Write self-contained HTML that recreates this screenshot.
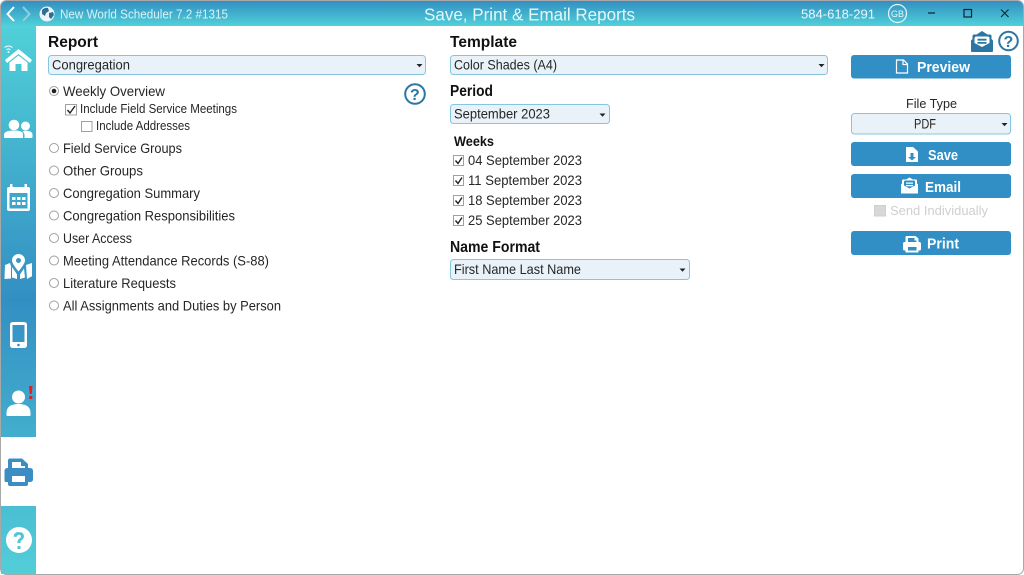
<!DOCTYPE html>
<html lang="en">
<head>
<meta charset="utf-8">
<title>New World Scheduler</title>
<style>
html,body{margin:0;padding:0;background:#fff;width:1024px;height:575px;overflow:hidden}
svg{display:block;filter:blur(.25px)}
text{font-family:"Liberation Sans",sans-serif;fill:#262626}
.b{font-weight:bold;font-size:16px;fill:#111}
.n{font-size:14px}
.s{font-size:12.5px}
.w{font-weight:bold;font-size:14.5px;fill:#fff}
.sel{fill:#e9f2f8;stroke:#86c5e0;stroke-width:1}
.btn{fill:#318fc5}
.r{fill:#fff;stroke:#a0a0a0;stroke-width:1}
.c{fill:#fff;stroke:#a0a0a0;stroke-width:1}
.m{fill:none;stroke:#222;stroke-width:1.4}
</style>
</head>
<body>
<svg width="1024" height="575" viewBox="0 0 1024 575" xmlns="http://www.w3.org/2000/svg">
<defs>
<linearGradient id="tb" x1="0" y1="0" x2="0" y2="1"><stop offset="0" stop-color="#338fc3"/><stop offset="1" stop-color="#50d0d8"/></linearGradient>
<linearGradient id="sb" gradientUnits="userSpaceOnUse" x1="0" y1="26" x2="0" y2="574"><stop offset="0" stop-color="#50d0d8"/><stop offset=".5" stop-color="#338fc3"/><stop offset="1" stop-color="#52ced8"/></linearGradient>
</defs>
<rect width="1024" height="575" fill="#fff"/>
<path d="M1 26V6Q1 1 6 1H1018Q1023 1 1023 6V26Z" fill="url(#tb)"/>
<rect x="1" y="26" width="35" height="548" fill="url(#sb)"/>
<rect x="1" y="437" width="35" height="69" fill="#fff"/>
<rect x=".5" y=".5" width="1023" height="574" rx="6" fill="none" stroke="#a8a8a8"/>

<!-- title bar -->
<path d="M14 7L7.500 14L14 21" fill="none" stroke="#fff" stroke-width="2"/>
<path d="M23 7L29.500 14L23 21" fill="none" stroke="#8fd0dc" stroke-width="2"/>
<circle cx="47" cy="14" r="7.500" fill="#eef4f6"/>
<path d="M42 10q3-3 6-2l1 3-3 2-1 3-3-2zM49 13l4-1 1 3-3 4-2-2z" fill="#2d6f96"/>
<text x="60" y="18.500" textLength="168" lengthAdjust="spacingAndGlyphs" font-size="12.500" style="fill:#d8f2f6">New World Scheduler 7.2 #1315</text>
<text x="424" y="20.500" textLength="211" lengthAdjust="spacingAndGlyphs" font-size="17.500" style="fill:#e6f7f9">Save, Print &amp; Email Reports</text>
<text x="801" y="18.500" textLength="74" lengthAdjust="spacingAndGlyphs" font-size="13" style="fill:#eaf8fa">584-618-291</text>
<circle cx="897.500" cy="13.500" r="9" fill="none" stroke="#e6f7f9" stroke-width="1.200"/>
<text x="891" y="17" textLength="13" lengthAdjust="spacingAndGlyphs" font-size="9.500" style="fill:#e6f7f9">GB</text>
<path d="M928 13h7" stroke="#123" stroke-width="1.200"/>
<rect x="964" y="9.500" width="7.500" height="7.500" fill="none" stroke="#123" stroke-width="1.200"/>
<path d="M1001 9.500l7.500 7.500M1008.500 9.500l-7.500 7.500" stroke="#123" stroke-width="1.100"/>

<!-- sidebar icons -->
<g fill="#fff">
<path d="M5 60L18.500 49L32 60L30 63L18.500 54L7 63Z"/>
<path d="M9.500 62.500L18.500 55.500L27.500 62.500V71H21.500V64H15.500V71H9.500Z"/>
<path d="M4.500 47.500q4-3 8-0M6.500 49.800q2-1.700 4 0" fill="none" stroke="#fff" stroke-width="1"/>
<circle cx="8.500" cy="52" r="1"/>
<circle cx="14" cy="125" r="5.300"/><circle cx="25.500" cy="126" r="4.500"/>
<path d="M5 138q-1 0-1-1v-2q0-4.500 10-4.500t9 4.500v3z"/><path d="M24.500 138v-3q0-2-2-3.500q1-.8 3.500-.8q6.500 0 6.500 4.300v2q0 1-1 1z"/>
<path fill-rule="evenodd" d="M10 184h2.500v3h12v-3h2.500v3h1q2 0 2 2v20q0 2-2 2H9q-2 0-2-2v-20q0-2 2-2h1zM9.500 193v15.500h18V193z"/>
<rect x="12" y="197" width="3.500" height="3"/><rect x="17" y="197" width="3.500" height="3"/><rect x="22" y="197" width="3.500" height="3"/>
<rect x="12" y="202" width="3.500" height="3"/><rect x="17" y="202" width="3.500" height="3"/><rect x="22" y="202" width="3.500" height="3"/>
<path fill-rule="evenodd" d="M18.500 254a6.500 6.500 0 0 1 6.500 6.500q0 3-6.500 11q-6.500-8-6.500-11a6.500 6.500 0 0 1 6.500-6.500zM18.500 258a2.500 2.500 0 1 0 .01 0z"/>
<path d="M5 265l5-2q.5 2 1 3v12.500l-6 0.500q-.5 0-.5-.5zM12 267q3 4 5 7.500v4.500l-5-1.500zM20 274.500q2-3 4-6l1 9-5 1.500zM26 265l6-2v13q0 .5-.5.500L27 279z"/>
<path fill-rule="evenodd" d="M13 322h11q3 0 3 3v20q0 3-3 3H13q-3 0-3-3v-20q0-3 3-3zM12.500 325v17h12v-17z"/>
<circle cx="18.500" cy="345" r="1.300" fill="#338fc3"/>
<circle cx="18.500" cy="397" r="6.500"/>
<path d="M7 416q-.5 0-.5-1v-2q0-9 12-9t12 9v2q0 1-.5 1z"/>
<path d="M29 386h3.500l-.8 8h-1.900zM29.300 396h3v3h-3z" fill="#f01818"/>
<path fill-rule="evenodd" d="M19 527a13 13 0 1 1-.01 0zM19 532q-5 0-5.500 4.500l3 .5q.5-2.300 2.500-2.300t2 1.800q0 1-1.500 2t-2 3v1.500h3v-1q0-1 1.500-2t2-3.500q0-4.500-5.500-4.500zM17.500 546v3h3v-3z"/>
</g>
<g fill="#3a8ec4">
<path fill-rule="evenodd" d="M10 458.500h12l6 5.500v4h2q3 0 3 3v8q0 3-3 3h-2v2q0 2-2 2H10q-2 0-2-2v-2H6q-1.500 0-1.500-1.500V471q0-3 3-3H8v-7.500q0-2 2-2zM12 462v6h13v-2h-4v-4zM12 476v6h13v-6z"/>
</g>

<!-- Report column -->
<text class="b" x="48" y="47" textLength="50" lengthAdjust="spacingAndGlyphs">Report</text>
<rect class="sel" x="48.500" y="55.500" width="377" height="19" rx="3"/>
<text class="n" x="52" y="69.500" textLength="78" lengthAdjust="spacingAndGlyphs">Congregation</text>
<path d="M416.500 64h6l-3 3.200z" fill="#222"/>

<circle class="r" cx="54" cy="91" r="4.500"/><circle cx="54" cy="91" r="2.300" fill="#222"/>
<text class="n" x="63" y="96" textLength="102" lengthAdjust="spacingAndGlyphs">Weekly Overview</text>
<rect class="c" x="65.500" y="104.500" width="11" height="10.500"/><path class="m" d="M67.500 110l2.500 3 5-7"/>
<text class="s" x="80" y="113" textLength="157" lengthAdjust="spacingAndGlyphs">Include Field Service Meetings</text>
<rect class="c" x="81.500" y="121.500" width="10.500" height="10"/>
<text class="s" x="96" y="130" textLength="94" lengthAdjust="spacingAndGlyphs">Include Addresses</text>

<circle class="r" cx="54" cy="148" r="4.500"/><text class="n" x="63" y="153" textLength="119" lengthAdjust="spacingAndGlyphs">Field Service Groups</text>
<circle class="r" cx="54" cy="170.500" r="4.500"/><text class="n" x="63" y="175.500" textLength="80" lengthAdjust="spacingAndGlyphs">Other Groups</text>
<circle class="r" cx="54" cy="193" r="4.500"/><text class="n" x="63" y="198" textLength="137" lengthAdjust="spacingAndGlyphs">Congregation Summary</text>
<circle class="r" cx="54" cy="215.500" r="4.500"/><text class="n" x="63" y="220.500" textLength="172" lengthAdjust="spacingAndGlyphs">Congregation Responsibilities</text>
<circle class="r" cx="54" cy="238" r="4.500"/><text class="n" x="63" y="243" textLength="69" lengthAdjust="spacingAndGlyphs">User Access</text>
<circle class="r" cx="54" cy="260.500" r="4.500"/><text class="n" x="63" y="265.500" textLength="206" lengthAdjust="spacingAndGlyphs">Meeting Attendance Records (S-88)</text>
<circle class="r" cx="54" cy="283" r="4.500"/><text class="n" x="63" y="288" textLength="113" lengthAdjust="spacingAndGlyphs">Literature Requests</text>
<circle class="r" cx="54" cy="305.500" r="4.500"/><text class="n" x="63" y="310.500" textLength="218" lengthAdjust="spacingAndGlyphs">All Assignments and Duties by Person</text>

<circle cx="415" cy="94" r="9.800" fill="none" stroke="#2c76a3" stroke-width="2"/>
<text x="410" y="100" font-size="16" font-weight="bold" style="fill:#2c76a3">?</text>

<!-- Template column -->
<text class="b" x="450" y="47" textLength="67" lengthAdjust="spacingAndGlyphs">Template</text>
<rect class="sel" x="450.500" y="55.500" width="377" height="19" rx="3"/>
<text class="n" x="454" y="69.500" textLength="103" lengthAdjust="spacingAndGlyphs">Color Shades (A4)</text>
<path d="M818.500 64h6l-3 3.200z" fill="#222"/>

<text class="b" x="450" y="96" textLength="43" lengthAdjust="spacingAndGlyphs">Period</text>
<rect class="sel" x="450.500" y="104.500" width="159" height="19" rx="3"/>
<text class="n" x="454" y="118.500" textLength="96" lengthAdjust="spacingAndGlyphs">September 2023</text>
<path d="M599.500 113.500h6l-3 3.200z" fill="#222"/>

<text x="454" y="146" textLength="40" lengthAdjust="spacingAndGlyphs" font-size="14" font-weight="bold" style="fill:#111">Weeks</text>
<rect class="c" x="453.500" y="155.500" width="10" height="10"/><path class="m" d="M455.500 160.500l2.500 3 4-6"/>
<text class="n" x="468" y="165" textLength="114" lengthAdjust="spacingAndGlyphs">04 September 2023</text>
<rect class="c" x="453.500" y="175.500" width="10" height="10"/><path class="m" d="M455.500 180.500l2.500 3 4-6"/>
<text class="n" x="468" y="185" textLength="114" lengthAdjust="spacingAndGlyphs">11 September 2023</text>
<rect class="c" x="453.500" y="195.500" width="10" height="10"/><path class="m" d="M455.500 200.500l2.500 3 4-6"/>
<text class="n" x="468" y="205" textLength="114" lengthAdjust="spacingAndGlyphs">18 September 2023</text>
<rect class="c" x="453.500" y="215.500" width="10" height="10"/><path class="m" d="M455.500 220.500l2.500 3 4-6"/>
<text class="n" x="468" y="225" textLength="114" lengthAdjust="spacingAndGlyphs">25 September 2023</text>

<text class="b" x="450" y="252" textLength="90" lengthAdjust="spacingAndGlyphs">Name Format</text>
<rect class="sel" x="450.500" y="259.500" width="239" height="20" rx="3"/>
<text class="n" x="454" y="274" textLength="127" lengthAdjust="spacingAndGlyphs">First Name Last Name</text>
<path d="M679.500 268.500h6l-3 3.200z" fill="#222"/>

<!-- top-right icons -->
<path fill="#2c76a3" d="M982 31l5.500 3.500H990q1.500 0 1.500 1.500v3l1.500 1.500V51q0 1-1 1h-20q-1 0-1-1V40.500l1.500-1.500v-3q0-1.500 1.500-1.500h2.500z"/>
<path fill="#fff" d="M974.500 39q0-2.500 2-2.500h11q2 0 2 2v4.500l-7.500 4-7.500-4z"/>
<path fill="#2c76a3" d="M977.500 38.800h9v1.800h-9zM977.500 42h9v1.800h-9z"/>
<circle cx="1008.500" cy="41" r="9.300" fill="none" stroke="#2c76a3" stroke-width="2"/>
<text x="1003.500" y="47" font-size="16" font-weight="bold" style="fill:#2c76a3">?</text>

<!-- right buttons -->
<rect class="btn" x="851" y="55" width="160" height="23.500" rx="3"/>
<path d="M896.500 60h7l4 4v9h-11zM903 60v4.500h4.500" fill="none" stroke="#fff" stroke-width="1.200"/>
<text class="w" x="917" y="72" textLength="53" lengthAdjust="spacingAndGlyphs">Preview</text>

<text x="906" y="108" textLength="51" lengthAdjust="spacingAndGlyphs" font-size="13">File Type</text>
<rect class="sel" x="851.500" y="113.500" width="159" height="20.500" rx="3"/>
<text x="914" y="128.500" textLength="22" lengthAdjust="spacingAndGlyphs" font-size="13.500">PDF</text>
<path d="M1001.500 123h6l-3 3.200z" fill="#222"/>

<rect class="btn" x="851" y="142" width="160" height="24" rx="3"/>
<path fill="#fff" fill-rule="evenodd" d="M906 147h7l5 4.500V162h-12zM910.500 153v4h-2.500l4 3.500 4-3.500h-2.500v-4z"/>
<text class="w" x="928" y="160" textLength="30" lengthAdjust="spacingAndGlyphs">Save</text>

<rect class="btn" x="851" y="174" width="160" height="24" rx="3"/>
<path fill="#fff" d="M909.500 177.500l3.500 2h3q1 0 1 1v3l1 1v8.500q0 .5-.5.5H901.500q-.5 0-.5-.5V184.500l1-1v-3q0-1 1-1h3z"/>
<path fill="#318fc5" d="M904 182q0-1.500 1.500-1.500h8q1.500 0 1.500 1.500v3.500l-5.500 3-5.500-3z"/>
<path fill="#fff" d="M906 182.500h7v1.200h-7zM906 185h7v1.200h-7z"/>
<text class="w" x="925" y="192" textLength="36" lengthAdjust="spacingAndGlyphs">Email</text>

<rect x="874.500" y="205.500" width="11" height="10.500" fill="#d8d8d8" stroke="#cfcfcf"/>
<text x="890" y="215" textLength="98" lengthAdjust="spacingAndGlyphs" font-size="13" style="fill:#cfcfcf">Send Individually</text>

<rect class="btn" x="851" y="231" width="160" height="24" rx="3"/>
<path fill="#fff" fill-rule="evenodd" d="M906.500 236h9l3 2.500V242h1q1.500 0 1.500 2v5q0 1.500-1.500 1.500h-1v1.500q0 .5-.5.500H906q-.5 0-.5-.5V250.500h-1q-1.500 0-1.500-1.500v-5q0-2 1.500-2h1v-5q0-1 1-1zM908 238v4h8.500v-1.500h-2V238zM908 247v3.500h8.500V247z"/>
<text class="w" x="927" y="248.500" textLength="32" lengthAdjust="spacingAndGlyphs">Print</text>
</svg>
</body>
</html>
